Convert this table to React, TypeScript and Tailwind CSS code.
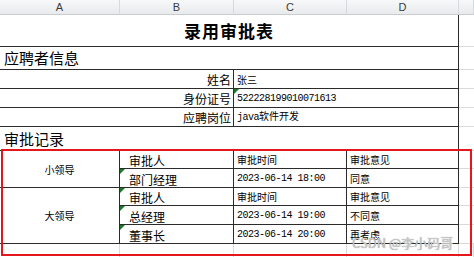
import React from "react";

const dark = "border-[#2b2b2b]";
const grid = "border-[#dadada]";
const cjk = "[font-family:'Noto_Sans_CJK_SC',sans-serif]";
const mono = "[font-family:'Liberation_Mono','Noto_Sans_CJK_SC',monospace]";

function Cell({
  className = "",
  children,
  mark = false,
}: {
  className?: string;
  children?: React.ReactNode;
  mark?: boolean;
}) {
  return (
    <div className={`relative flex min-w-0 overflow-hidden whitespace-nowrap border-b border-r ${className}`}>
      {mark && (
        <span className="absolute left-0 top-0 h-0 w-0 border-r-[5px] border-t-[5px] border-r-transparent border-t-[#1a7a2a]" />
      )}
      {children}
    </div>
  );
}

const Num = ({ v }: { v: string }) => (
  <span className={`${mono} text-[10px] tracking-[-0.5px]`}>{v}</span>
);

const rows = [
  { lead: "小领导", span: "row-span-2", items: [
    { b: "审批人", c: "审批时间", d: "审批意见", cNum: false, mark: false },
    { b: "部门经理", c: "2023-06-14 18:00", d: "同意", cNum: true, mark: true },
  ] },
  { lead: "大领导", span: "row-span-3", items: [
    { b: "审批人", c: "审批时间", d: "审批意见", cNum: false, mark: true },
    { b: "总经理", c: "2023-06-14 19:00", d: "不同意", cNum: true, mark: true },
    { b: "董事长", c: "2023-06-14 20:00", d: "再考虑", cNum: true, mark: true },
  ] },
];

export default function App() {
  return (
    <div className={`relative h-[257px] w-[474px] overflow-hidden bg-white text-black ${cjk}`}>
      <div className="grid grid-cols-[120px_114px_113px_112px_15px] grid-rows-[15px_32px_23px_19px_19px_19px_24px_18px_19px_18px_19px_19px_13px]">
        {/* column headers */}
        {["A", "B", "C", "D", ""].map((h, i) => (
          <div key={i}
            className="flex items-center justify-center border-b border-r border-b-[#c9ccd0] border-r-[#d6d9dd] bg-gradient-to-b from-[#f7f8f9] to-[#e8eaec] text-[11px] leading-none text-[#3c3c3c] [font-family:'Liberation_Sans',sans-serif]">
            {h}
          </div>
        ))}

        {/* title */}
        <Cell className={`col-span-4 items-center justify-center ${dark}`}>
          <span className="text-[17px] font-bold tracking-[1px]">录用审批表</span>
        </Cell>
        <Cell className={`border-r-0 ${grid}`} />

        <Cell className={`col-span-4 items-end pb-[1px] pl-[4px] ${dark}`}>
          <span className="text-[15px] leading-[20px]">应聘者信息</span>
        </Cell>
        <Cell className={`border-r-0 ${grid}`} />

        {[
          ["姓名", "张三", false],
          ["身份证号", "522228199010071613", true],
          ["应聘岗位", "java软件开发", false],
        ].map(([k, v, n]) => (
          <React.Fragment key={k as string}>
            <Cell className={`col-span-2 items-end justify-end pr-[2px] ${dark}`}>
              <span className="text-[12px] leading-[16px]">{k}</span>
            </Cell>
            <Cell mark={n as boolean} className={`col-span-2 items-end pb-[1px] pl-[3px] ${dark}`}>
              {n ? (
                <Num v={v as string} />
              ) : v === "java软件开发" ? (
                <span className="text-[10px] leading-[14px]">
                  <span className={`${mono} tracking-[-0.5px]`}>java</span>软件开发
                </span>
              ) : (
                <span className="text-[10px] leading-[14px]">{v}</span>
              )}
            </Cell>
            <Cell className={`border-r-0 ${grid}`} />
          </React.Fragment>
        ))}

        <Cell className={`col-span-4 items-end pb-[1px] pl-[4px] ${dark}`}>
          <span className="text-[15px] leading-[20px]">审批记录</span>
        </Cell>
        <Cell className={`border-r-0 ${grid}`} />

        {rows.map((g) => (
          <React.Fragment key={g.lead}>
            {g.items.map((it, i) => (
              <React.Fragment key={i}>
                {i === 0 && (
                  <Cell className={`${g.span} items-center justify-center ${dark}`}>
                    <span className="text-[10px]">{g.lead}</span>
                  </Cell>
                )}
                <Cell mark={it.mark} className={`items-end pl-[9px] ${dark}`}>
                  <span className="text-[12px] leading-[15px]">{it.b}</span>
                </Cell>
                <Cell className={`items-center pl-[3px] ${dark}`}>
                  {it.cNum ? <Num v={it.c} /> : <span className="text-[10px]">{it.c}</span>}
                </Cell>
                <Cell className={`items-center pl-[3px] ${dark}`}>
                  <span className="text-[10px]">{it.d}</span>
                </Cell>
                <Cell className={`border-r-0 ${grid}`} />
              </React.Fragment>
            ))}
          </React.Fragment>
        ))}

        {[0, 1, 2, 3, 4].map((i) => (
          <Cell key={i} className={`border-b-0 ${grid}`} />
        ))}
      </div>

      {/* annotation box */}
      <div className="pointer-events-none absolute left-[1px] top-[149px] h-[107px] w-[471px] border-2 border-[#e5171d]" />

      {/* watermark */}
      <div className="pointer-events-none absolute left-[352px] top-[236px] text-[13px] leading-none text-[#c9c9c9] [text-shadow:0_0_1px_#8a8a8a]">
        CSDN @李小码哥
      </div>
    </div>
  );
}
